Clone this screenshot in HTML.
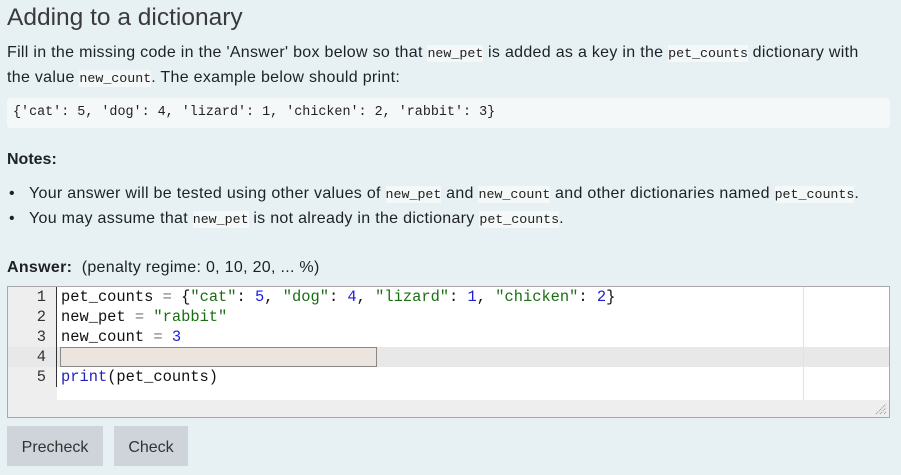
<!DOCTYPE html>
<html><head><meta charset="utf-8"><style>
body{margin:0;background:#e7f1f4;font-family:"Liberation Sans",sans-serif;color:#1d2125;width:901px;height:475px;overflow:hidden;position:relative}
.a{position:absolute;white-space:nowrap}
h1{position:absolute;left:7px;top:4px;margin:0;font-weight:300;font-size:24.5px;color:#3a3a3a}
.t{font-size:16px;line-height:25px;letter-spacing:0.3px}
code{font-family:"Liberation Mono",monospace;font-size:13.3px;letter-spacing:0;background:#f4f8f9;color:#222;padding:1px 0}
.pre{position:absolute;left:7px;top:98px;width:883px;height:30px;background:#f4f8f9;border-radius:4px;font-family:"Liberation Mono",monospace;font-size:13.4px;line-height:30px;box-sizing:border-box;padding-left:6px;color:#222}
.ed{position:absolute;left:7px;top:286px;width:883px;height:132px;border:1px solid #a9a9a9;box-sizing:border-box;background:#eee}
.wh{position:absolute;left:49px;top:0;right:0;height:113px;background:#fff}
.gut{position:absolute;left:0;top:0;width:49px;height:113px;background:#eee}
.hl{position:absolute;left:0;right:0;top:60px;height:20px;background:#e8e8e8}
.cl{position:absolute;left:48px;top:0;width:1px;height:100px;background:#333}
.ln{position:absolute;left:0;width:38px;text-align:right;font-family:"Liberation Mono",monospace;font-size:15.4px;line-height:20px;color:#333}
.cd{position:absolute;left:53px;font-family:"Liberation Mono",monospace;font-size:15.4px;line-height:20px;color:#111;white-space:pre}
.s{color:#1a6e12}.n{color:#2020d8}.k{color:#2323b8}.o{color:#777}
.box{position:absolute;left:52px;top:60px;width:317px;height:20px;box-sizing:border-box;border:1px solid #888;background:#ece4df}
.rm{position:absolute;left:795px;top:0;width:1px;height:113px;background:#e2e2e2}
.btn{position:absolute;top:426px;height:40px;background:#ced4da;font-size:16px;line-height:43px;text-align:center;color:#333}
</style></head><body>
<h1>Adding to a dictionary</h1>
<div class="a t" style="left:7px;top:40px">Fill in the missing code in the 'Answer' box below so that <code>new_pet</code> is added as a key in the <code>pet_counts</code> dictionary with</div>
<div class="a t" style="left:7px;top:65px">the value <code>new_count</code>. The example below should print:</div>
<div class="pre">{'cat': 5, 'dog': 4, 'lizard': 1, 'chicken': 2, 'rabbit': 3}</div>
<div class="a t" style="left:7px;top:147px;font-weight:bold;letter-spacing:0">Notes:</div>
<div class="a t" style="left:9px;top:181px">•</div>
<div class="a t" style="left:29px;top:181px">Your answer will be tested using other values of <code>new_pet</code> and <code>new_count</code> and other dictionaries named <code>pet_counts</code>.</div>
<div class="a t" style="left:9px;top:206px">•</div>
<div class="a t" style="left:29px;top:206px">You may assume that <code>new_pet</code> is not already in the dictionary <code>pet_counts</code>.</div>
<div class="a t" style="left:7px;top:255px"><b>Answer:</b>&nbsp; (penalty regime: 0, 10, 20, ... %)</div>
<div class="ed">
<div class="wh"></div><div class="gut"></div><div class="hl"></div><div class="rm"></div><div class="cl"></div>
<div class="box"></div>
<div class="ln" style="top:0">1</div><div class="ln" style="top:20px">2</div><div class="ln" style="top:40px">3</div><div class="ln" style="top:60px">4</div><div class="ln" style="top:80px">5</div>
<div class="cd" style="top:0">pet_counts <span class="o">=</span> {<span class="s">"cat"</span>: <span class="n">5</span>, <span class="s">"dog"</span>: <span class="n">4</span>, <span class="s">"lizard"</span>: <span class="n">1</span>, <span class="s">"chicken"</span>: <span class="n">2</span>}</div>
<div class="cd" style="top:20px">new_pet <span class="o">=</span> <span class="s">"rabbit"</span></div>
<div class="cd" style="top:40px">new_count <span class="o">=</span> <span class="n">3</span></div>
<div class="cd" style="top:80px"><span class="k">print</span>(pet_counts)</div>
<svg style="position:absolute;right:2px;bottom:2px" width="12" height="12"><path d="M1 11L11 1M5 11L11 5M9 11L11 9" stroke="#888" stroke-width="1" stroke-dasharray="1 1"/></svg>
</div>
<div class="btn" style="left:7px;width:96px">Precheck</div>
<div class="btn" style="left:114px;width:74px">Check</div>
</body></html>
